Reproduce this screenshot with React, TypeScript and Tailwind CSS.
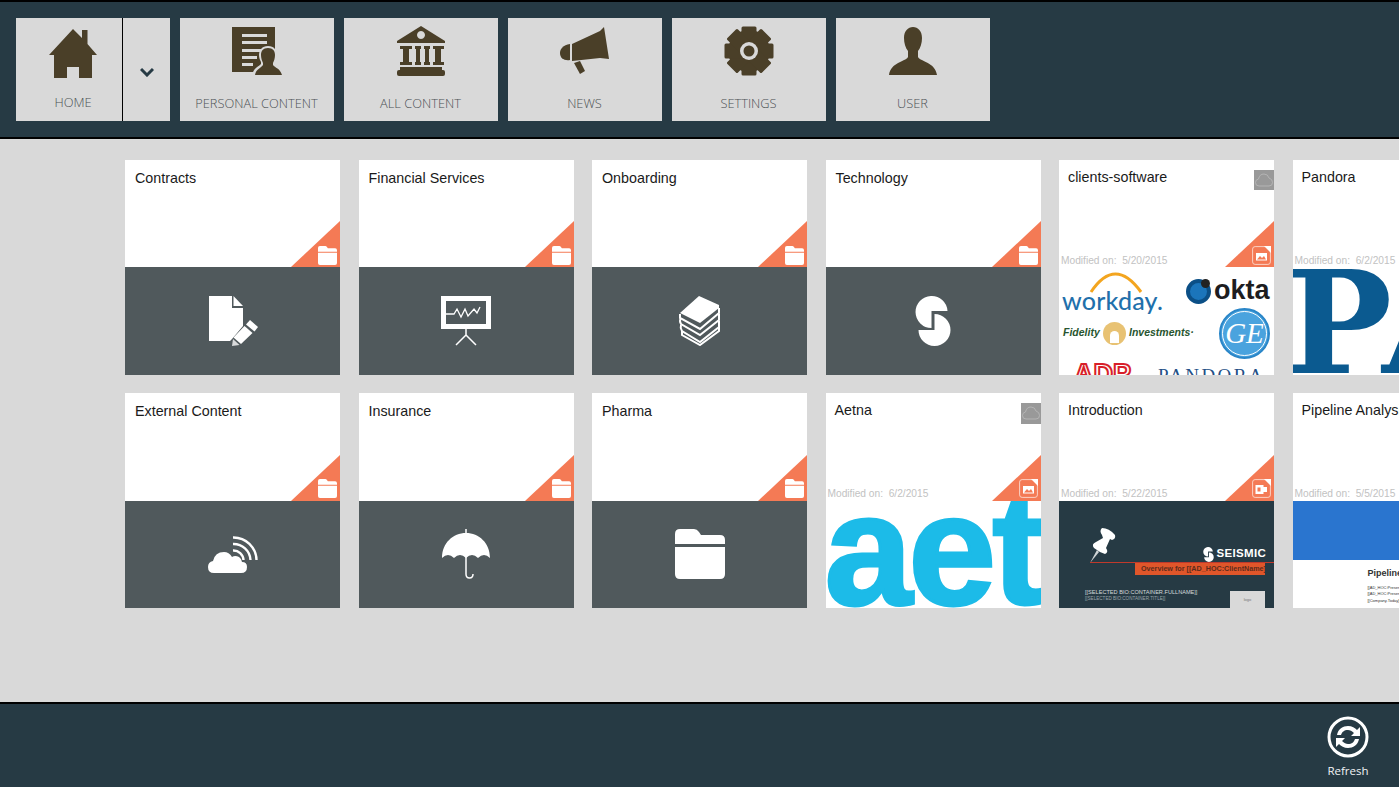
import type { ReactNode } from 'react';

const sans = "font-['Liberation_Sans',Arial,sans-serif]";
const navFont = "font-['Open_Sans',sans-serif] font-light";

/* ---------- nav icons ---------- */
const HomeIcon = () => (
  <svg width="48" height="50" viewBox="0 0 48 50" fill="#4a3f28">
    <path fillRule="evenodd" d="M24 0 33 9V1H38.5V15L48 26H43V49H30V38H18V49H5V26H0Z" />
  </svg>
);

const PersonalIcon = () => (
  <svg width="50" height="50" viewBox="0 0 50 50" fill="#4a3f28">
    <rect x="0" y="1" width="43" height="45" />
    <g fill="#d9d9d9">
      <rect x="10" y="8" width="25" height="3" />
      <rect x="10" y="15" width="25" height="3" />
      <rect x="10" y="23" width="19" height="3" />
      <rect x="10" y="30" width="15" height="3" />
      <rect x="10" y="37" width="11" height="3" />
      <path d="M36 20C42 20 45 24 45 29 45 32 44 34 43 36V38C46 41 51 42 52 50H20C21 42 26 41 29 38V36C28 34 27 32 27 29 27 24 30 20 36 20Z" />
    </g>
    <path d="M36 22C41 22 43 25 43 29 43 32 42 35 41 37V39C43 42 48 42 50 49H23C24 43 29 42 31 39V37C30 35 29 32 29 29 29 25 31 22 36 22Z" />
  </svg>
);

const BankIcon = () => (
  <svg width="48" height="50" viewBox="0 0 48 50" fill="#4a3f28">
    <path fillRule="evenodd" d="M24 0 48 15V17H0V15ZM24 5A4 4 0 1 0 24.01 5Z" />
    <path d="M3 20H15V23H12V36H15V39H3V36H6V23H3ZM18 20H24V23H23V36H24V39H18V36H19V23H18ZM27 20H33V23H32V36H33V39H27V36H28V23H27ZM36 20H47V23H44V36H47V39H36V36H38V23H36Z" />
    <rect x="3" y="41" width="42" height="3" />
    <rect x="0" y="44" width="48" height="6" rx="2" />
  </svg>
);

const MegaphoneIcon = () => (
  <svg width="50" height="50" viewBox="0 0 50 50" fill="#4a3f28">
    <path d="M12 18 40 5 44 1 49 33 40 32 12 35Z" />
    <path d="M10 18C3 19 0 23 0 27 0 32 4 35 10 34Z" />
    <path d="M14 37 20 35 25 45 20 48Z" />
  </svg>
);

const GearIcon = () => (
  <svg width="50" height="50" viewBox="0 0 50 50" fill="#4a3f28">
    <circle cx="25" cy="25" r="21" />
    {[0, 45, 90, 135].map((deg) => (
      <rect key={deg} x="17.5" y="0.5" width="15" height="49" rx="1.5" transform={`rotate(${deg} 25 25)`} />
    ))}
    <circle cx="25" cy="25" r="9" fill="#d9d9d9" />
    <circle cx="25" cy="25" r="5.5" />
  </svg>
);

const UserIcon = () => (
  <svg width="50" height="50" viewBox="0 0 50 50" fill="#4a3f28">
    <path d="M25 1C30 1 34 5 34 12 34 17 32.5 22 30 25V31C33 36 47 36 49 49H1C3 36 17 36 20 31V25C17.5 22 16 17 16 12 16 5 20 1 25 1Z" />
  </svg>
);

/* ---------- tile icons ---------- */
const FolderIcon = ({ size }: { size: number }) => (
  <svg width={size} height={size} viewBox="0 0 50 50" fill="#fff">
    <path d="M0 15V5Q0 0 5 0H19Q22 0 24 3L26 6H45Q50 6 50 11V15Z" />
    <path d="M0 18H50V45Q50 50 45 50H5Q0 50 0 45Z" />
  </svg>
);

const DocIcon = () => (
  <svg width="50" height="50" viewBox="0 0 50 50" fill="#fff">
    <path d="M1 0H24V12H35V30L24 43 22 45H1Z" />
    <path d="M25.5 0 35 10H25.5Z" />
    <path d="M42 24 50 31 46.5 35.5 38 28.5Z" />
    <path d="M36.5 30 44.5 37 33 48 25.5 41.5Z" />
    <path d="M25 43 31.5 49 24 50Z" fill="#d8dadb" />
  </svg>
);

const ChartIcon = () => (
  <svg width="50" height="50" viewBox="0 0 50 50" fill="none" stroke="#fff">
    <rect x="2.5" y="2.5" width="45" height="28" strokeWidth="5" />
    <path d="M5 18H13L16 13 20 21 24 13 27 20 33 13 36 17 39 11" strokeWidth="1.3" />
    <path d="M25 33V39M25 39 15 49M25 39 35 49" strokeWidth="1.5" />
  </svg>
);

const BooksIcon = () => (
  <svg width="50" height="50" viewBox="0 0 50 50" fill="none" stroke="#fff">
    <path d="M24 0 44 9V12L25 27 5 17Z" fill="#fff" stroke="none" />
    <path d="M5 18V22L25 33 44 17V12" strokeWidth="2" />
    <path d="M6 22Q4 25 6 28L25 39 44 24V18" strokeWidth="2" />
    <path d="M6 29Q5 32 7 35L25 46 44 31V25" strokeWidth="2" />
    <path d="M7 35V39L25 49 44 35V31" strokeWidth="2" />
  </svg>
);

const SeismicIcon = ({ size = 50 }: { size?: number }) => (
  <svg width={size} height={size} viewBox="0 0 50 50" fill="#fff">
    <g transform="translate(7.5 0)">
      <path d="M16 32A16 16 0 1 1 32 15L16 15Z" />
      <path d="M3 34A16 16 0 1 0 19 18L19 34Z" />
    </g>
  </svg>
);

const CloudWifiIcon = () => (
  <svg width="50" height="50" viewBox="0 0 50 50" fill="none" stroke="#fff" strokeWidth="2.4">
    <path d="M6 44Q0 44 0 38 0 33 5 32 7 23 16 23 21 23 24 28 27 26 31 28 34 30 34 33 39 33 39 38 39 44 33 44Z" fill="#fff" stroke="none" />
    <path d="M25 8.5A23 23 0 0 1 48.5 31" />
    <path d="M25 15A17 17 0 0 1 42.5 31" />
    <path d="M25 21.5A10 10 0 0 1 35.5 31" />
  </svg>
);

const UmbrellaIcon = () => (
  <svg width="50" height="50" viewBox="0 0 50 50" fill="none">
    <path d="M1 29C1 14 12 4 25 4S49 14 49 29Q43 23 37 29 31 23 25 29 19 23 13 29 7 23 1 29Z" fill="#fff" />
    <path d="M25 0V5M25 27V45Q25 49 28.5 49T32 45" stroke="#fff" strokeWidth="1.5" />
  </svg>
);

const FileBadge = ({ kind }: { kind: 'image' | 'slides' }) => (
  <svg width="19" height="19" viewBox="0 0 19 19" fill="none">
    <rect x="0.6" y="0.6" width="17.8" height="17.8" rx="2.5" stroke="#fbd2c4" strokeWidth="1" />
    <path d="M12 0H19V7Z" fill="#fff" />
    {kind === 'image' ? (
      <g>
        <rect x="4" y="7" width="11" height="7.5" fill="#fff" />
        <path d="M5 13.5 8 10 10 12 12 10 14 13.5Z" fill="#f47a55" />
      </g>
    ) : (
      <g fill="#fff">
        <rect x="3.5" y="6" width="8" height="9" />
        <path d="M9 8H15V13H9Z" />
        <rect x="5.5" y="8.5" width="3" height="4" fill="#f47a55" />
      </g>
    )}
  </svg>
);

const CloudBadge = () => (
  <div className="absolute right-0 top-[10px] w-[20px] h-[20.5px] bg-[#999999] flex items-center justify-center">
    <svg width="18" height="14" viewBox="0 0 18 14" fill="none" stroke="#b4b4b4" strokeWidth="1">
      <path d="M4 13Q0.5 13 0.5 9.5 0.5 6.5 3.5 6 4.5 1 9 1 13 1 14 5 17.5 6 17.5 9.5 17.5 13 14 13Z" />
    </svg>
  </div>
);

/* ---------- preview images ---------- */
const ClientsPreview = () => (
  <div className="relative w-full h-full bg-white overflow-hidden">
    <svg className="absolute left-[29px] top-[5px]" width="56" height="22" viewBox="0 0 56 22" fill="none">
      <path d="M3 20Q27 -16 53 20" stroke="#f3a51f" strokeWidth="3" />
    </svg>
    <span className="absolute left-[3px] top-[18px] font-['Lato',sans-serif] font-medium text-[#1f70ab] text-[25px] leading-[30px] tracking-[0.2px]">workday.</span>
    <div className="absolute left-[127px] top-[12px] w-[25px] h-[25px] rounded-full bg-[#1b75bb] border-[4px] border-[#0b4f86]" />
    <div className="absolute left-[142px] top-[12px] w-[9px] h-[9px] rounded-full bg-[#222]" />
    <span className={`absolute left-[155px] top-[6px] ${sans} font-bold text-[#1d1d1f] text-[27px] leading-[34px]`}>okta</span>
    <span className={`absolute left-[4px] top-[59px] ${sans} font-bold italic text-[#28552f] text-[10.5px] leading-[13px]`}>Fidelity</span>
    <div className="absolute left-[44px] top-[55px] w-[23px] h-[23px] rounded-full bg-[#e8c273] flex items-center justify-center">
      <div className="w-[9px] h-[12px] rounded-t-full bg-white mt-[6px]" />
    </div>
    <span className={`absolute left-[70px] top-[59px] ${sans} font-bold italic text-[#28552f] text-[10.5px] leading-[13px]`}>Investments·</span>
    <div className="absolute left-[160px] top-[41px] w-[51px] h-[51px] rounded-full bg-[#4aa3de] border-[2px] border-[#2a86c8] outline outline-1 -outline-offset-4 outline-white flex items-center justify-center">
      <span className="font-['Liberation_Serif',serif] italic text-white text-[29px] leading-none">GE</span>
    </div>
    <span className={`absolute left-[15px] top-[92px] ${sans} font-bold text-transparent [-webkit-text-stroke:2px_#d81f2a] text-[27px] leading-[30px]`}>ADP</span>
    <span className="absolute left-[99px] top-[99px] font-['Liberation_Serif',serif] text-[#234f86] text-[19px] leading-[20px] tracking-[2.4px]">PANDORA</span>
  </div>
);

const PandoraPreview = () => (
  <div className="relative w-full h-full bg-white overflow-hidden">
    <span className="absolute left-[-7px] top-[6px] font-['DejaVu_Serif',serif] font-bold text-[#0b5a90] text-[142px] leading-[100px]">PA</span>
  </div>
);

const AetnaPreview = () => (
  <div className="relative w-full h-full bg-white overflow-hidden">
    <span className={`absolute left-[-1px] top-[-2px] ${sans} font-bold text-[#1cbbe8] [-webkit-text-stroke:3px_#1cbbe8] text-[158px] leading-[100px] tracking-[-4px] whitespace-nowrap`}>aet</span>
  </div>
);

const IntroPreview = () => (
  <div className="relative w-full h-full bg-[#263a44] overflow-hidden text-white">
    <svg className="absolute left-[30px] top-[26px]" width="28" height="37" viewBox="0 0 28 37" fill="#fff">
      <path d="M13 1Q20 1 26 8 27 12 23 13L21 12 17 21Q20 25 16 27 10 25 5 21 2 17 7 15L14 11 13 8Q10 4 13 1Z" />
      <path d="M8 23 10 25 1 36Z" fill="#cfd4d6" />
    </svg>
    <div className="absolute left-[31px] right-0 top-[61px] h-[1px] bg-[#c0392b]" />
    <div className="absolute left-[142px] top-[46px]">
      <SeismicIcon size={15} />
    </div>
    <span className={`absolute right-[8px] top-[44px] ${sans} font-bold text-[11.5px] leading-[16px] tracking-[0.3px]`}>SEISMIC</span>
    <div className={`absolute left-[76px] top-[62px] w-[130px] h-[12px] bg-[#e0562a] ${sans} font-bold text-[#5d2c1c] text-[7.2px] leading-[12px] pl-[6px] whitespace-nowrap overflow-hidden`}>
      Overview for [[AD_HOC:ClientName]]
    </div>
    <span className={`absolute left-[26px] top-[87px] ${sans} text-[#d5dadc] text-[5.6px] leading-[9px] whitespace-nowrap`}>[[SELECTED BIO:CONTAINER.FULLNAME]]</span>
    <span className={`absolute left-[26px] top-[94px] ${sans} text-[#9aa5aa] text-[4.6px] leading-[7px] whitespace-nowrap`}>[[SELECTED BIO:CONTAINER.TITLE]]</span>
    <div className={`absolute left-[171px] top-[90px] w-[35px] h-[18px] bg-[#d9d9d9] ${sans} text-[#777] text-[4px] text-center leading-[18px]`}>logo</div>
  </div>
);

const PipelinePreview = () => (
  <div className="w-full h-full bg-white overflow-hidden flex flex-col">
    <div className="h-[59px] shrink-0 bg-[#2a75cf]" />
    <div className={`pl-[75px] pt-[7px] ${sans} text-[#333] whitespace-nowrap`}>
      <p className="font-bold text-[9px] leading-[12px] mb-[6px]">Pipeline</p>
      <p className="text-[4px] leading-[6.5px]">[[AD_HOC:Presenter]]</p>
      <p className="text-[4px] leading-[6.5px]">[[AD_HOC:Presenter]]</p>
      <p className="text-[4px] leading-[6.5px]">[[Company.Today]]</p>
    </div>
  </div>
);

/* ---------- pieces ---------- */
type Tile = {
  title: string;
  icon?: ReactNode;
  preview?: ReactNode;
  modified?: string;
  badge?: 'image' | 'slides';
  cloud?: boolean;
};

const tiles: Tile[] = [
  { title: 'Contracts', icon: <DocIcon /> },
  { title: 'Financial Services', icon: <ChartIcon /> },
  { title: 'Onboarding', icon: <BooksIcon /> },
  { title: 'Technology', icon: <SeismicIcon /> },
  { title: 'clients-software', preview: <ClientsPreview />, modified: '5/20/2015', badge: 'image', cloud: true },
  { title: 'Pandora', preview: <PandoraPreview />, modified: '6/2/2015', badge: 'image' },
  { title: 'External Content', icon: <CloudWifiIcon /> },
  { title: 'Insurance', icon: <UmbrellaIcon /> },
  { title: 'Pharma', icon: <FolderIcon size={50} /> },
  { title: 'Aetna', preview: <AetnaPreview />, modified: '6/2/2015', badge: 'image', cloud: true },
  { title: 'Introduction', preview: <IntroPreview />, modified: '5/22/2015', badge: 'slides' },
  { title: 'Pipeline Analysis', preview: <PipelinePreview />, modified: '5/5/2015', badge: 'slides' },
];

function NavButton({ label, icon }: { label: string; icon: ReactNode }) {
  return (
    <button className="w-[154px] h-[103px] bg-[#d9d9d9] flex flex-col items-center pt-[8px]">
      <span className="h-[50px]">{icon}</span>
      <span className={`mt-[18px] ${navFont} text-[12.8px] leading-[18px] text-[#4c5155] -ml-[1px]`}>{label}</span>
    </button>
  );
}

function TileCard({ tile }: { tile: Tile }) {
  const isFile = !!tile.preview;
  return (
    <div className={`relative h-[215px] bg-white overflow-hidden flex flex-col ${sans}`}>
      <div className="relative h-[107.5px] shrink-0">
        <p className={`whitespace-nowrap text-[14.3px] leading-[18px] text-[#1a1a1a] ${isFile ? 'pl-[9px] pt-[8px]' : 'pl-[10px] pt-[9px]'}`}>
          {tile.title}
        </p>
        {tile.cloud && <CloudBadge />}
        {tile.modified && (
          <p className="absolute left-[2px] bottom-[-0.5px] text-[10.2px] leading-[14px] text-[#c2c2c2] whitespace-nowrap">
            Modified on:&nbsp; {tile.modified}
          </p>
        )}
      </div>
      <div className="h-[107.5px] shrink-0 bg-[#50595c] flex items-center justify-center">
        {tile.preview ?? tile.icon}
      </div>
      {/* orange corner with the type icon */}
      <svg className="absolute right-0 top-[61.5px]" width="49" height="46" viewBox="0 0 49 46">
        <path d="M49 0V46H0Z" fill="#f47a55" />
      </svg>
      <div className="absolute right-[3px] top-[86px]">
        {tile.badge ? <FileBadge kind={tile.badge} /> : <FolderIcon size={19} />}
      </div>
    </div>
  );
}

export default function App() {
  return (
    <div className="w-[1399px] h-[787px] flex flex-col overflow-hidden bg-[#d9d9d9]">
      {/* top app bar */}
      <header className="h-[139px] shrink-0 bg-[#263a44] border-t-2 border-b-2 border-black pl-[16px] pt-[16px] flex items-start gap-[10px]">
        <div className="w-[154px] h-[103px] bg-[#d9d9d9] flex">
          <button className="w-[107px] shrink-0 flex flex-col items-center pt-[11px] pl-[8px] border-r border-black">
            <HomeIcon />
            <span className={`mt-[14px] ${navFont} text-[12.8px] leading-[18px] text-[#4c5155]`}>HOME</span>
          </button>
          <button className="flex-1 flex items-center justify-center pt-[4px]">
            <svg width="14" height="10" viewBox="0 0 14 10" fill="none" stroke="#263a44" strokeWidth="3">
              <path d="M1 2 7 8 13 2" />
            </svg>
          </button>
        </div>
        <NavButton label="PERSONAL CONTENT" icon={<PersonalIcon />} />
        <NavButton label="ALL CONTENT" icon={<BankIcon />} />
        <NavButton label="NEWS" icon={<MegaphoneIcon />} />
        <NavButton label="SETTINGS" icon={<GearIcon />} />
        <NavButton label="USER" icon={<UserIcon />} />
      </header>

      {/* tile grid */}
      <main className="flex-1 overflow-hidden pl-[125px] pt-[20.5px]">
        <div className="grid grid-cols-[repeat(6,215px)] gap-x-[18.5px] gap-y-[18.5px] w-[1400px]">
          {tiles.map((tile) => (
            <TileCard key={tile.title} tile={tile} />
          ))}
        </div>
      </main>

      {/* bottom app bar */}
      <footer className="h-[85px] shrink-0 bg-[#263a44] border-t-2 border-black flex justify-end pr-[30px] pt-[12px]">
        <button className="flex flex-col items-center">
          <svg width="42" height="42" viewBox="0 0 42 42" fill="none">
            <circle cx="21" cy="21" r="19" stroke="#fff" strokeWidth="3" />
            <path d="M10 19C11 13 16 10 21 10 25 10 28 12 30 14L33 11V20H24L27 17C25 15 23 14 21 14 17 14 15 16 14 19Z" fill="#fff" />
            <path d="M32 23C31 29 26 32 21 32 17 32 14 30 12 28L9 31V22H18L15 25C17 27 19 28 21 28 25 28 27 26 28 23Z" fill="#fff" />
          </svg>
          <span className="mt-[5px] font-['Open_Sans',sans-serif] text-[11.5px] leading-[16px] text-[#f0f3f4]">Refresh</span>
        </button>
      </footer>
    </div>
  );
}
